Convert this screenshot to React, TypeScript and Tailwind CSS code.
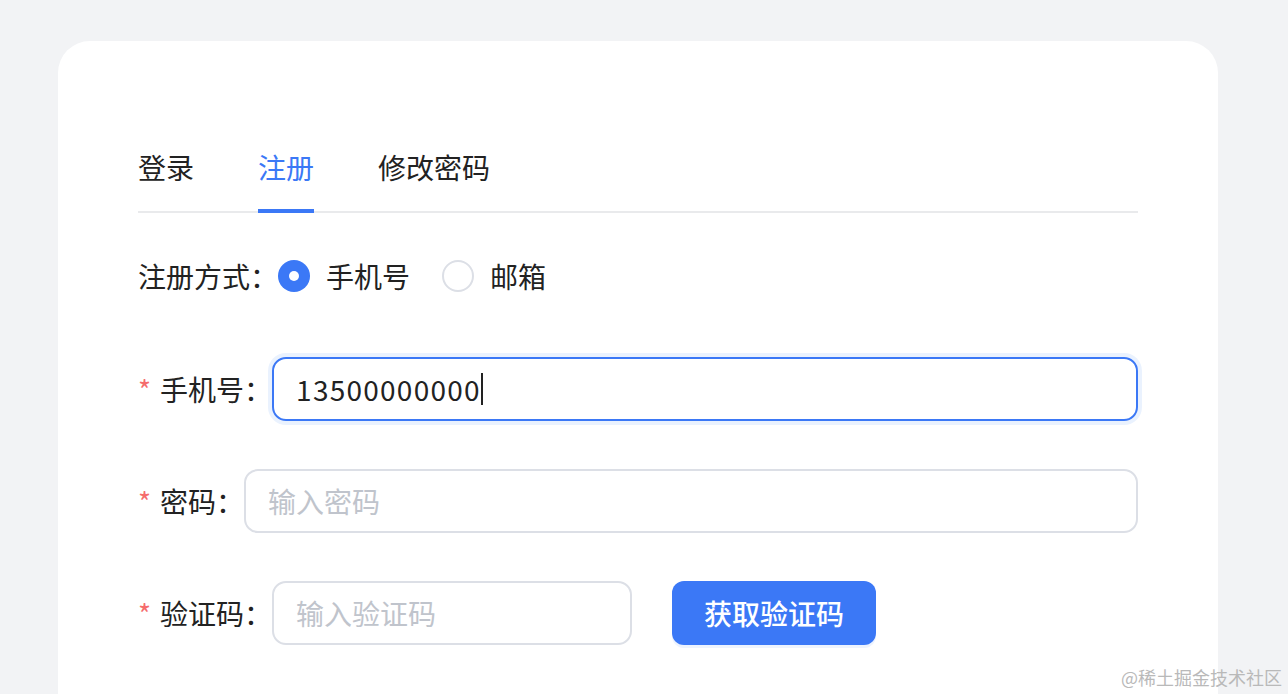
import { useState } from "react";

const font = { fontFamily: '"Noto Sans CJK SC", "Noto Sans", sans-serif' };

function Radio({ checked, label }: { checked: boolean; label: string }) {
  return (
    <label className="flex items-center gap-[16px] cursor-pointer">
      {checked ? (
        <span className="flex h-[32px] w-[32px] items-center justify-center rounded-full bg-[#3b78f6]">
          <span className="h-[10px] w-[10px] rounded-full bg-white" />
        </span>
      ) : (
        <span className="h-[32px] w-[32px] rounded-full border-2 border-[#dcdfe6] bg-white" />
      )}
      <span className="text-[28px] leading-[40px] text-[#222]">{label}</span>
    </label>
  );
}

function FieldLabel({ text }: { text: string }) {
  return (
    <div className="flex shrink-0 items-center text-[28px] leading-[40px] text-[#222]">
      <span className="mr-[9px] text-[#f56c6c]">*</span>
      <span>{text}：</span>
    </div>
  );
}

export default function App() {
  const [tab] = useState("注册");
  const tabs = ["登录", "注册", "修改密码"];

  return (
    <div className="relative h-[694px] overflow-hidden bg-[#f2f3f5] pt-[41px] pl-[58px]" style={font}>
      <div className="h-[653px] w-[1160px] rounded-t-[32px] bg-white pt-[106px] pl-[80px] pr-[80px]">
        <div className="flex gap-[64px] border-b-2 border-[#e9eaec]">
          {tabs.map((t) => (
            <div
              key={t}
              className={
                t === tab
                  ? "-mb-[2px] border-b-4 border-[#3b78f6] pb-[22px] text-[28px] leading-[40px] text-[#3b78f6]"
                  : "-mb-[2px] border-b-4 border-transparent pb-[22px] text-[28px] leading-[40px] text-[#222]"
              }
            >
              {t}
            </div>
          ))}
        </div>

        <div className="mt-[43px] flex items-center">
          <span className="text-[28px] leading-[40px] text-[#222]">注册方式：</span>
          <div className="flex items-center gap-[32px]">
            <Radio checked label="手机号" />
            <Radio checked={false} label="邮箱" />
          </div>
        </div>

        <div className="mt-[61px] flex items-center">
          <FieldLabel text="手机号" />
          <div className="flex h-[64px] flex-1 items-center rounded-[14px] border-2 border-[#3b78f6] pl-[22px] shadow-[0_0_0_4px_#eaf2fe]">
            <span className="text-[28px] leading-[40px] tracking-[1.25px] text-[#222]">13500000000</span>
            <span className="h-[32px] w-[2px] bg-[#222]" />
          </div>
        </div>

        <div className="mt-[48px] flex items-center">
          <FieldLabel text="密码" />
          <div className="flex h-[64px] flex-1 items-center rounded-[14px] border-2 border-[#dcdfe6] pl-[22px]">
            <span className="text-[28px] leading-[40px] text-[#c0c4cc]">输入密码</span>
          </div>
        </div>

        <div className="mt-[48px] flex items-center">
          <FieldLabel text="验证码" />
          <div className="flex h-[64px] w-[360px] items-center rounded-[14px] border-2 border-[#dcdfe6] pl-[22px]">
            <span className="text-[28px] leading-[40px] text-[#c0c4cc]">输入验证码</span>
          </div>
          <button className="ml-[40px] h-[64px] w-[204px] rounded-[12px] bg-[#3b78f6] text-[28px] font-medium text-white shadow-[0_3px_0_#edf3fe]">
            获取验证码
          </button>
        </div>
      </div>

      <div className="absolute right-[6px] bottom-[4px] text-[18px] leading-[26px] text-[#b9b9b9]">
        @稀土掘金技术社区
      </div>
    </div>
  );
}
